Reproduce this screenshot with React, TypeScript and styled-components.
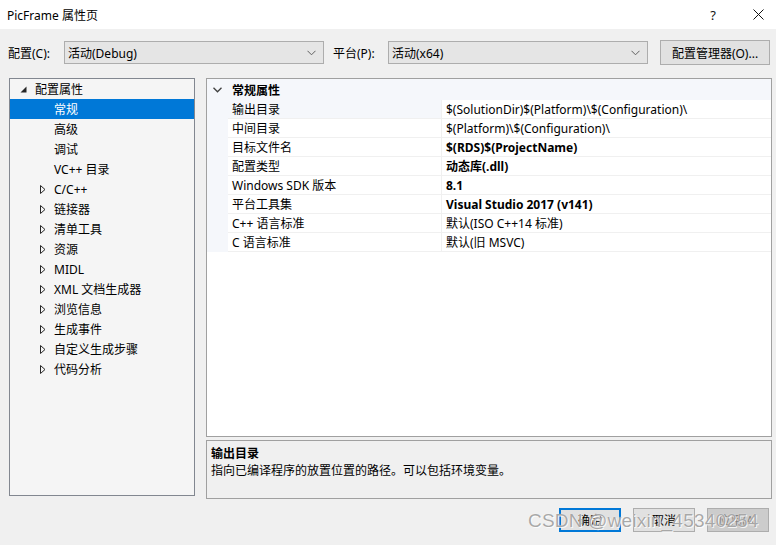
import React from "react";
import styled, { createGlobalStyle } from "styled-components";

const Global = createGlobalStyle`
  html, body { margin: 0; padding: 0; }
  body {
    width: 776px; height: 545px; overflow: hidden;
    font-family: "Segoe UI", "Noto Sans", "Noto Sans CJK SC", sans-serif;
    font-size: 12px; color: #000;
  }
`;

const Window = styled.div`
  position: relative;
  width: 776px; height: 545px;
  background: #f0f0f0;
  display: flex; flex-direction: column;
`;

const TitleBar = styled.div`
  height: 29px; background: #fff;
  display: flex; align-items: center;
  padding-left: 7px;
  font-size: 12px;
`;
const Title = styled.div` flex: 1; `;
const TitleBtn = styled.div<{ $w: number }>`
  width: ${p => p.$w}px; height: 29px;
  display: flex; align-items: center; justify-content: center;
  font-size: 13px; color: #111;
`;

const ConfigRow = styled.div`
  display: flex; align-items: center;
  height: 25px; margin-top: 11px; padding-left: 8px;
`;
const Label = styled.span<{ $w: number; $ml?: number }>`
  width: ${p => p.$w}px; flex: none;
  margin-left: ${p => p.$ml ?? 0}px;
`;
const Combo = styled.div<{ $w: number }>`
  width: ${p => p.$w}px; height: 23px; box-sizing: border-box;
  border: 1px solid #adadad; background: #e5e5e5;
  display: flex; align-items: center; padding-left: 3px;
`;
const ComboText = styled.span` flex: 1; `;
const Chev = styled.svg`
  width: 9px; height: 6px; margin-right: 7px;
`;
const Btn = styled.div<{ $primary?: boolean; $disabled?: boolean }>`
  height: 24px; box-sizing: border-box;
  display: flex; align-items: center; justify-content: center;
  border: ${p => (p.$primary ? "2px solid #0078d7" : "1px solid #adadad")};
  background: ${p => (p.$disabled ? "#cccccc" : "#e1e1e1")};
  color: ${p => (p.$disabled ? "#838383" : "#000")};
`;
const MgrBtn = styled(Btn)`
  width: 110px; margin-left: 12px; height: 25px;
`;

const Main = styled.div`
  display: flex; align-items: flex-start;
  margin-top: 13px; padding-left: 9px; gap: 11px;
`;
const Tree = styled.div`
  width: 186px; height: 418px; flex: none; box-sizing: border-box;
  border: 1px solid #828790; background: #f5f5f5;
`;
const TreeRow = styled.div<{ $level: number; $selected?: boolean }>`
  height: 20px; display: flex; align-items: center;
  padding-left: ${p => (p.$level === 0 ? 10 : 30)}px;
  background: ${p => (p.$selected ? "#0078d7" : "transparent")};
  color: ${p => (p.$selected ? "#fff" : "#000")};
`;
const Expander = styled.span<{ $level: number }>`
  width: ${p => (p.$level === 0 ? 15 : 14)}px;
  flex: none; display: flex; align-items: center;
`;

const Right = styled.div`
  width: 566px; flex: none; display: flex; flex-direction: column; gap: 3px;
`;
const Grid = styled.div`
  height: 359px; flex: none; box-sizing: border-box;
  border: 1px solid #a0a0a0; background: #fff;
`;
const GridRow = styled.div<{ $header?: boolean }>`
  display: flex; height: ${p => (p.$header ? 21 : 19)}px;
  background: ${p => (p.$header ? "#f5f7fb" : "#fff")};
  font-weight: ${p => (p.$header ? 700 : 400)};
`;
const Gutter = styled.div`
  width: 21px; flex: none; background: #f5f7fb;
  display: flex; align-items: center; justify-content: center;
`;
const Cell = styled.div<{ $w?: number; $bold?: boolean; $shade?: boolean }>`
  ${p => (p.$w ? `width: ${p.$w}px; flex: none;` : "flex: 1;")}
  box-sizing: border-box;
  border-bottom: 1px solid #f0f0f0;
  border-right: ${p => (p.$w ? "1px solid #f0f0f0" : "none")};
  background: ${p => (p.$shade ? "#f5f7fb" : "#fff")};
  padding-left: 4px;
  display: flex; align-items: center;
  font-weight: ${p => (p.$bold ? 700 : 400)};
  white-space: nowrap; overflow: hidden;
`;
const HeaderText = styled.div`
  padding-left: 4px; display: flex; align-items: center;
`;

const Desc = styled.div`
  height: 59px; flex: none; box-sizing: border-box;
  border: 1px solid #a0a0a0; background: #f0f0f0;
  padding: 4px 4px;
  line-height: 17px;
`;
const DescTitle = styled.div` font-weight: 700; `;

const Footer = styled.div`
  display: flex; justify-content: flex-end; gap: 12px;
  padding-right: 7px; margin-top: 9px;
`;
const FootBtn = styled(Btn)` width: 62px; `;

const Watermark = styled.div`
  position: absolute; left: 528px; top: 510px;
  font-family: "Liberation Sans", Arial, sans-serif;
  font-size: 19px; color: rgba(140,140,140,0.75);
  text-shadow: 0 0 1px #fff, 1px 1px 0 rgba(255,255,255,0.8);
  letter-spacing: 0.2px;
  pointer-events: none;
`;

const ChevDown = () => (
  <Chev viewBox="0 0 9 6"><path d="M0.5 0.8 L4.5 4.8 L8.5 0.8" fill="none" stroke="#606060" strokeWidth="1" /></Chev>
);

const Filled = () => (
  <svg width="7" height="7" viewBox="0 0 7 7"><path d="M6.5 0.5 L6.5 6.5 L0.5 6.5 Z" fill="#262626" /></svg>
);
const Outline = () => (
  <svg width="6" height="9" viewBox="0 0 6 9"><path d="M0.5 0.5 L5 4.5 L0.5 8.5 Z" fill="none" stroke="#262626" strokeWidth="1" /></svg>
);

const tree: { label: string; level: number; exp?: "open" | "closed"; selected?: boolean }[] = [
  { label: "配置属性", level: 0, exp: "open" },
  { label: "常规", level: 1, selected: true },
  { label: "高级", level: 1 },
  { label: "调试", level: 1 },
  { label: "VC++ 目录", level: 1 },
  { label: "C/C++", level: 1, exp: "closed" },
  { label: "链接器", level: 1, exp: "closed" },
  { label: "清单工具", level: 1, exp: "closed" },
  { label: "资源", level: 1, exp: "closed" },
  { label: "MIDL", level: 1, exp: "closed" },
  { label: "XML 文档生成器", level: 1, exp: "closed" },
  { label: "浏览信息", level: 1, exp: "closed" },
  { label: "生成事件", level: 1, exp: "closed" },
  { label: "自定义生成步骤", level: 1, exp: "closed" },
  { label: "代码分析", level: 1, exp: "closed" },
];

const props: { k: string; v: string; bold?: boolean }[] = [
  { k: "输出目录", v: "$(SolutionDir)$(Platform)\\$(Configuration)\\" },
  { k: "中间目录", v: "$(Platform)\\$(Configuration)\\" },
  { k: "目标文件名", v: "$(RDS)$(ProjectName)", bold: true },
  { k: "配置类型", v: "动态库(.dll)", bold: true },
  { k: "Windows SDK 版本", v: "8.1", bold: true },
  { k: "平台工具集", v: "Visual Studio 2017 (v141)", bold: true },
  { k: "C++ 语言标准", v: "默认(ISO C++14 标准)" },
  { k: "C 语言标准", v: "默认(旧 MSVC)" },
];

export default function App() {
  return (
    <>
      <Global />
      <Window>
        <TitleBar>
          <Title>PicFrame 属性页</Title>
          <TitleBtn $w={54}>?</TitleBtn>
          <TitleBtn $w={36}>
            <svg width="11" height="11" viewBox="0 0 11 11"><path d="M0.5 0.5 L10.5 10.5 M10.5 0.5 L0.5 10.5" stroke="#111" strokeWidth="1" /></svg>
          </TitleBtn>
        </TitleBar>
        <ConfigRow>
          <Label $w={56}>配置(C):</Label>
          <Combo $w={260}><ComboText>活动(Debug)</ComboText><ChevDown /></Combo>
          <Label $w={55} $ml={9}>平台(P):</Label>
          <Combo $w={260}><ComboText>活动(x64)</ComboText><ChevDown /></Combo>
          <MgrBtn>配置管理器(O)...</MgrBtn>
        </ConfigRow>
        <Main>
          <Tree>
            {tree.map((t, i) => (
              <TreeRow key={i} $level={t.level} $selected={t.selected}>
                <Expander $level={t.level}>
                  {t.exp === "open" ? <Filled /> : t.exp === "closed" ? <Outline /> : null}
                </Expander>
                <span>{t.label}</span>
              </TreeRow>
            ))}
          </Tree>
          <Right>
            <Grid>
              <GridRow $header>
                <Gutter>
                  <svg width="9" height="6" viewBox="0 0 9 6"><path d="M0.5 0.8 L4.5 4.8 L8.5 0.8" fill="none" stroke="#404040" strokeWidth="1.3" /></svg>
                </Gutter>
                <HeaderText>常规属性</HeaderText>
              </GridRow>
              {props.map((p, i) => (
                <GridRow key={i}>
                  <Gutter />
                  <Cell $w={214} $shade={i === 0}>{p.k}</Cell>
                  <Cell $bold={p.bold}>{p.v}</Cell>
                </GridRow>
              ))}
            </Grid>
            <Desc>
              <DescTitle>输出目录</DescTitle>
              <div>指向已编译程序的放置位置的路径。可以包括环境变量。</div>
            </Desc>
          </Right>
        </Main>
        <Footer>
          <FootBtn $primary>确定</FootBtn>
          <FootBtn>取消</FootBtn>
          <FootBtn $disabled>应用(A)</FootBtn>
        </Footer>
        <Watermark>CSDN @weixin_45340254</Watermark>
      </Window>
    </>
  );
}
